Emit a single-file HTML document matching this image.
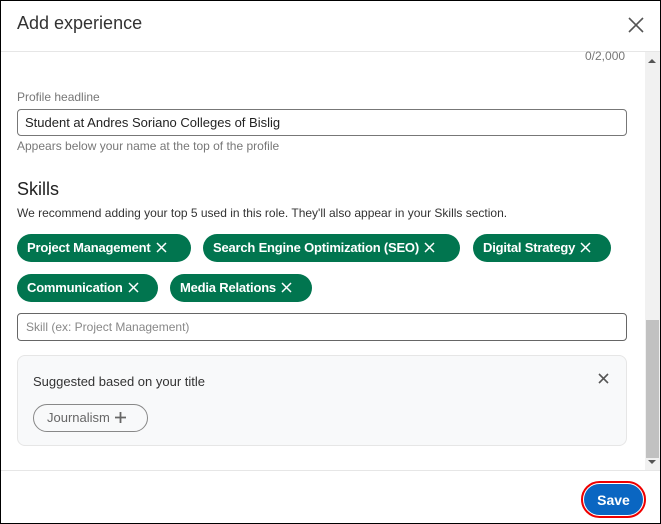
<!DOCTYPE html>
<html><head><style>
*{box-sizing:border-box;margin:0;padding:0}
body{width:661px;height:524px;overflow:hidden;background:#fff;font-family:"Liberation Sans",sans-serif;position:relative}
.frame{position:absolute;inset:0;border:1px solid #000}
.abs{position:absolute;white-space:nowrap}
.chip{position:absolute;height:28px;background:#01754f;color:#fff;border-radius:14px;font-weight:bold;font-size:13px;line-height:28px;padding:0 10px;letter-spacing:-0.2px}
.chip svg{display:inline-block;vertical-align:-1px;margin-left:5px}
</style></head><body>
<div class="frame"></div>
<div class="abs" style="left:17px;top:13px;font-size:18px;color:#333">Add experience</div>
<svg class="abs" style="left:628px;top:17px" width="16" height="16"><path d="M1 1L15 15M15 1L1 15" stroke="#555" stroke-width="1.6"/></svg>
<div class="abs" style="left:1px;top:51px;width:659px;height:1px;background:#e6e6e6"></div>
<div class="abs" style="left:645px;top:52px;width:15px;height:418px;background:#f1f1f1"></div>
<div class="abs" style="left:646px;top:320px;width:13px;height:138px;background:#c1c1c1"></div>
<div class="abs" style="left:648px;top:59px;width:0;height:0;border-left:4px solid transparent;border-right:4px solid transparent;border-bottom:4px solid #555"></div>
<div class="abs" style="left:648px;top:460px;width:0;height:0;border-left:4px solid transparent;border-right:4px solid transparent;border-top:4px solid #555"></div>
<div class="abs" style="left:585px;top:49px;font-size:12px;color:#777">0/2,000</div>
<div class="abs" style="left:17px;top:90px;font-size:12px;color:#777">Profile headline</div>
<div class="abs" style="left:17px;top:109px;width:610px;height:27px;border:1px solid #777;border-radius:4px;font-size:13px;color:#222;line-height:25px;padding-left:7px">Student at Andres Soriano Colleges of Bislig</div>
<div class="abs" style="left:17px;top:139px;font-size:12px;color:#777">Appears below your name at the top of the profile</div>
<div class="abs" style="left:17px;top:179px;font-size:18px;color:#222">Skills</div>
<div class="abs" style="left:17px;top:206px;font-size:12px;color:#333">We recommend adding your top 5 used in this role. They'll also appear in your Skills section.</div>
<div class="chip" style="left:17px;top:234px;width:174px">Project Management<svg width="11" height="11"><path d="M1 1L10 10M10 1L1 10" stroke="#fff" stroke-width="1.5"/></svg></div>
<div class="chip" style="left:203px;top:234px;width:257px">Search Engine Optimization (SEO)<svg width="11" height="11"><path d="M1 1L10 10M10 1L1 10" stroke="#fff" stroke-width="1.5"/></svg></div>
<div class="chip" style="left:473px;top:234px;width:138px">Digital Strategy<svg width="11" height="11"><path d="M1 1L10 10M10 1L1 10" stroke="#fff" stroke-width="1.5"/></svg></div>
<div class="chip" style="left:17px;top:274px;width:141px">Communication<svg width="11" height="11"><path d="M1 1L10 10M10 1L1 10" stroke="#fff" stroke-width="1.5"/></svg></div>
<div class="chip" style="left:170px;top:274px;width:142px">Media Relations<svg width="11" height="11"><path d="M1 1L10 10M10 1L1 10" stroke="#fff" stroke-width="1.5"/></svg></div>
<div class="abs" style="left:17px;top:313px;width:610px;height:28px;border:1px solid #666;border-radius:4px;font-size:12px;color:#888;line-height:26px;padding-left:8px">Skill (ex: Project Management)</div>
<div class="abs" style="left:17px;top:355px;width:610px;height:91px;background:#f8f9fa;border:1px solid #e6e6e6;border-radius:8px"></div>
<div class="abs" style="left:33px;top:374px;font-size:13px;color:#333">Suggested based on your title</div>
<svg class="abs" style="left:598px;top:373px" width="11" height="11"><path d="M1 1L10 10M10 1L1 10" stroke="#555" stroke-width="1.6"/></svg>
<div class="abs" style="left:33px;top:404px;width:115px;height:28px;border:1px solid #888;border-radius:14px;font-size:13px;color:#666;line-height:26px;padding-left:13px">Journalism <svg width="11" height="11" style="vertical-align:-1px;margin-left:2px"><path d="M5.5 0V11M0 5.5H11" stroke="#666" stroke-width="1.8"/></svg></div>
<div class="abs" style="left:1px;top:470px;width:659px;height:1px;background:#e6e6e6"></div>
<div class="abs" style="left:581px;top:481px;width:65px;height:37px;border:2px solid #e00;border-radius:19px"></div>
<div class="abs" style="left:584px;top:484px;width:59px;height:31px;background:#0a66c2;border-radius:16px;color:#fff;font-weight:bold;font-size:14px;line-height:33px;text-align:center">Save</div>
</body></html>
